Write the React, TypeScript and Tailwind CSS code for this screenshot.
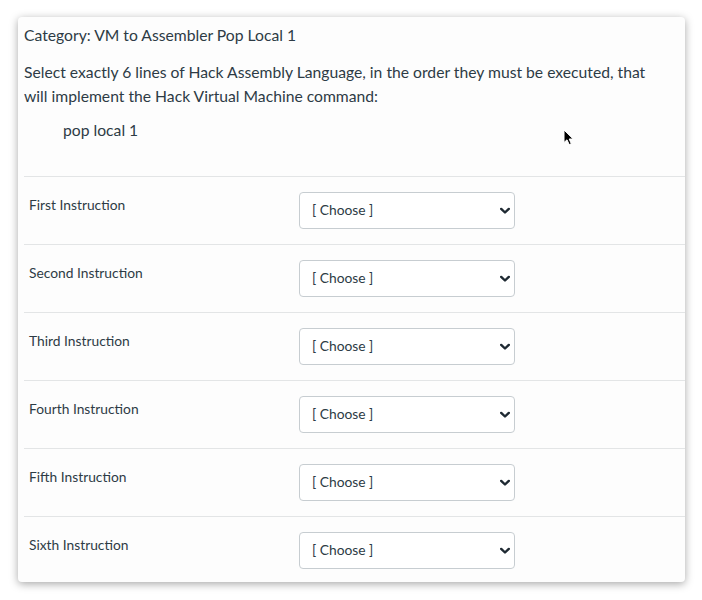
import React from "react";

const rows = [
  "First Instruction",
  "Second Instruction",
  "Third Instruction",
  "Fourth Instruction",
  "Fifth Instruction",
  "Sixth Instruction",
];

function Chevron() {
  return (
    <svg
      className="pointer-events-none absolute right-[5px] top-1/2 -translate-y-1/2"
      width="10"
      height="7"
      viewBox="0 0 10 7"
    >
      <path d="M1.2 1.3 L5 5 L8.8 1.3" fill="none" stroke="#1f2a33" strokeWidth="2.4" strokeLinecap="round" strokeLinejoin="round" />
    </svg>
  );
}

function Cursor() {
  return (
    <svg className="absolute left-[545px] top-[112px]" width="12" height="17" viewBox="0 0 12 17">
      <path d="M1 1 L1 13.5 L4 10.8 L6.2 15.6 L8.3 14.7 L6.2 10 L10.2 10 Z" fill="#000" stroke="#fff" strokeWidth="1" strokeLinejoin="round" />
    </svg>
  );
}

export default function App() {
  return (
    <div className="min-h-[600px] w-[702px] bg-white pl-[18px] pt-[17px] font-['Lato','Liberation_Sans',sans-serif] text-[#2d3b45]">
      <div className="relative h-[565px] w-[667px] overflow-hidden rounded-[4px] bg-[#fdfdfd] shadow-[0_2px_9px_rgba(0,0,0,0.35)]">
        <Cursor />
        <div className="px-[6px] pt-[6px] text-[15.7px] leading-[24px]">
          <p>Category: VM to Assembler Pop Local 1</p>
          <p className="mt-[13px] pr-[10px]">
            Select exactly 6 lines of Hack Assembly Language, in the order they must be executed, that will implement the Hack Virtual Machine command:
          </p>
          <p className="mt-[10px] pl-[39px]">pop local 1</p>
        </div>
        <div className="ml-[6px] mt-[34px]">
          {rows.map((label) => (
            <div key={label} className="flex h-[68px] border-t border-[#e3e5e6]">
              <div className="w-[275px] pl-[5px] pt-[18px] text-[13.8px] leading-[20px]">{label}</div>
              <div className="flex items-center">
                <div className="relative">
                  <select
                    defaultValue=""
                    className="h-[37px] w-[216px] appearance-none rounded-[4px] border border-[#c7cdd1] bg-white pl-[12px] text-[13.8px] text-[#2d3b45] outline-none"
                  >
                    <option value="">[ Choose ]</option>
                  </select>
                  <Chevron />
                </div>
              </div>
            </div>
          ))}
        </div>
      </div>
    </div>
  );
}
